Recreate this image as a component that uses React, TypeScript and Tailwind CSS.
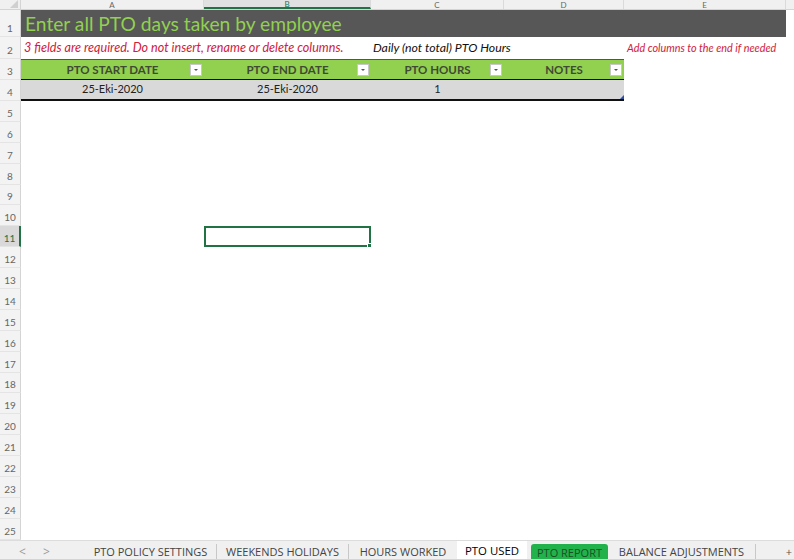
import React from "react";

const cols = [
  { key: "A", w: "w-[183px]" },
  { key: "B", w: "w-[167px]" },
  { key: "C", w: "w-[133px]" },
  { key: "D", w: "w-[120px]" },
  { key: "E", w: "w-[162px]" },
];

const calibri = { fontFamily: "Lato, 'Open Sans', sans-serif" };

function RowHead({ n, active = false }: { n: number; active?: boolean }) {
  return (
    <div
      className={
        "w-[21px] shrink-0 flex items-end justify-center pb-[1px] text-[10px] leading-none border-b border-[#e4e4e4] " +
        (active
          ? "bg-[#d9d9d9] text-[#217346] border-r-2 border-r-[#217346]"
          : "bg-[#f3f3f3] text-[#666] border-r border-r-[#d4d4d4]")
      }
    >
      <span className="pb-[2px]">{n}</span>
    </div>
  );
}

function Dropdown() {
  return (
    <div className="absolute right-[2px] top-[4px] w-[12px] h-[12px] bg-white border border-[#c8c8c8] flex items-center justify-center">
      <svg width="6" height="4" viewBox="0 0 6 4">
        <path d="M1 1 L3 3 L5 1 Z" fill="#555" />
      </svg>
    </div>
  );
}

function HeadCell({ w, label }: { w: string; label: string }) {
  return (
    <div className={w + " relative h-full flex items-center justify-center"}>
      <span className="text-[11.5px] font-bold text-[#3f4a33]">{label}</span>
      <Dropdown />
    </div>
  );
}

export default function App() {
  const empty = Array.from({ length: 21 }, (_, i) => i + 5);

  return (
    <div
      className="w-[794px] h-[559px] overflow-hidden bg-white flex flex-col select-none"
      style={calibri}
    >
      {/* column header strip */}
      <div className="h-[10px] shrink-0 flex bg-[#f0f0f0] border-b border-[#d4d4d4]">
        <div className="w-[21px] shrink-0 relative border-r border-[#d4d4d4]">
          <svg className="absolute right-[2px] bottom-[1px]" width="8" height="8" viewBox="0 0 8 8">
            <path d="M8 0 L8 8 L0 8 Z" fill="#d0d0d0" />
          </svg>
        </div>
        {cols.map((c) => (
          <div
            key={c.key}
            className={
              c.w +
              " shrink-0 flex items-center justify-center border-r border-[#dadada] " +
              (c.key === "B" ? "bg-[#e1e1e1] border-b-2 border-b-[#217346] text-[#217346]" : "text-[#666]")
            }
          >
            <span className="text-[8px] leading-none">{c.key}</span>
          </div>
        ))}
        <div className="flex-1" />
      </div>

      {/* row 1 */}
      <div className="h-[27px] shrink-0 flex">
        <RowHead n={1} />
        <div className="w-[765px] shrink-0 bg-[#575757] flex items-center pl-[4px]">
          <span className="text-[19.2px] leading-none text-[#92d050]">Enter all PTO days taken by employee</span>
        </div>
      </div>

      {/* row 2 */}
      <div className="h-[22px] shrink-0 flex">
        <RowHead n={2} />
        <div className="w-[350px] shrink-0 flex items-center pl-[3px]">
          <span className="text-[12.6px] italic text-[#d0203a] whitespace-nowrap">
            3 fields are required. Do not insert, rename or delete columns.
          </span>
        </div>
        <div className="w-[253px] shrink-0 flex items-center pl-[2px]">
          <span className="text-[12.3px] italic text-[#111] whitespace-nowrap">Daily (not total) PTO Hours</span>
        </div>
        <div className="w-[170px] shrink-0 flex items-end pl-[3px] pb-[3px]">
          <span className="text-[10.8px] italic text-[#d0203a] whitespace-nowrap">Add columns to the end if needed</span>
        </div>
      </div>

      {/* row 3 table header */}
      <div className="h-[21px] shrink-0 flex">
        <RowHead n={3} />
        <div className="flex bg-[#92d050] border-t border-[#4b5e3a] border-b border-b-[#111]">
          <HeadCell w="w-[183px]" label="PTO START DATE" />
          <HeadCell w="w-[167px]" label="PTO END DATE" />
          <HeadCell w="w-[133px]" label="PTO HOURS" />
          <HeadCell w="w-[120px]" label="NOTES" />
        </div>
      </div>

      {/* row 4 data */}
      <div className="h-[21px] shrink-0 flex">
        <RowHead n={4} />
        <div className="relative flex bg-[#d9d9d9] border-b-2 border-[#111] text-[11px] text-[#222]">
          <div className="w-[183px] flex items-center justify-center">25-Eki-2020</div>
          <div className="w-[167px] flex items-center justify-center">25-Eki-2020</div>
          <div className="w-[133px] flex items-center justify-center">1</div>
          <div className="w-[120px]" />
          <svg className="absolute right-0 bottom-0" width="4" height="4" viewBox="0 0 4 4">
            <path d="M4 0 L4 4 L0 4 Z" fill="#2f4fa8" />
          </svg>
        </div>
      </div>

      {/* empty rows */}
      {empty.map((n) => (
        <div key={n} className="h-[20.9px] shrink-0 flex">
          <RowHead n={n} active={n === 11} />
          <div className="w-[183px] shrink-0" />
          {n === 11 ? (
            <div className="w-[167px] shrink-0 relative border-2 border-[#217346]">
              <div className="absolute -right-[3px] -bottom-[3px] w-[5px] h-[5px] bg-[#217346] border border-white" />
            </div>
          ) : (
            <div className="w-[167px] shrink-0" />
          )}
        </div>
      ))}

      {/* sheet tabs */}
      <div
        className="flex-1 flex items-stretch bg-[#f0f0f0] border-t border-[#dcdcdc] text-[11px] text-[#444]"
        style={{ fontFamily: "'Open Sans', 'Noto Sans', sans-serif" }}
      >
        <div className="w-[85px] shrink-0 flex items-center gap-[17px] pl-[19px] text-[#9a9a9a] text-[12px]">
          <span>&lt;</span>
          <span>&gt;</span>
        </div>
        <div className="w-[132px] shrink-0 flex items-center justify-center border-r border-[#c8c8c8] my-[3px]">
          PTO POLICY SETTINGS
        </div>
        <div className="w-[132px] shrink-0 flex items-center justify-center border-r border-[#c8c8c8] my-[3px]">
          WEEKENDS HOLIDAYS
        </div>
        <div className="w-[108px] shrink-0 flex items-center justify-center">HOURS WORKED</div>
        <div className="w-[70px] shrink-0 flex items-start justify-center bg-white text-[11.4px] text-black pt-[1px]">
          PTO USED
        </div>
        <div className="w-[77px] shrink-0 ml-[4px] mt-[3px] rounded-t-[3px] bg-[#22b24c] flex items-center justify-center text-[#1a4f22]">
          PTO REPORT
        </div>
        <div className="w-[148px] shrink-0 flex items-center justify-center border-r border-[#c8c8c8] my-[3px]">
          BALANCE ADJUSTMENTS
        </div>
        <div className="flex-1 flex items-center justify-end pr-[2px] text-[#555]">
          <span>+</span>
        </div>
      </div>
    </div>
  );
}
